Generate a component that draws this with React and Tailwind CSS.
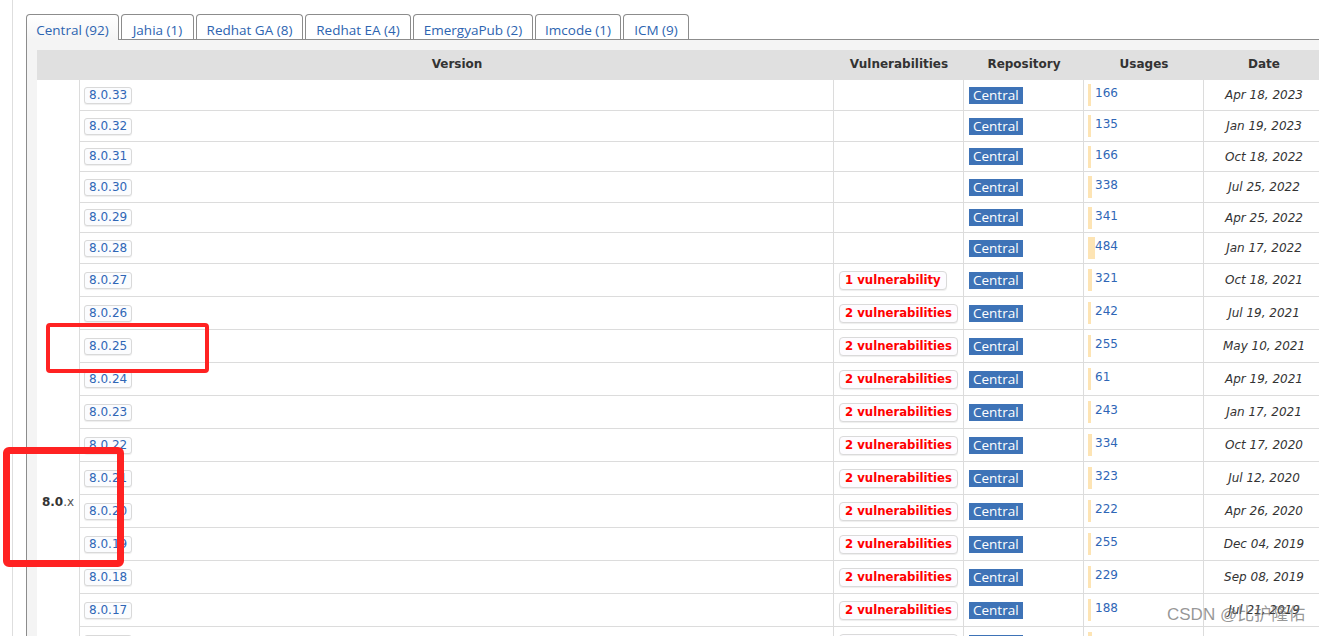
const tabs = [
  { label: "Central (92)", w: "w-[93px]", active: true },
  { label: "Jahia (1)", w: "w-[73px]" },
  { label: "Redhat GA (8)", w: "w-[107px]" },
  { label: "Redhat EA (4)", w: "w-[106px]" },
  { label: "EmergyaPub (2)", w: "w-[120px]" },
  { label: "Imcode (1)", w: "w-[86px]" },
  { label: "ICM (9)", w: "w-[66px]" },
];

const rows = [
  ["8.0.33", 0, 166, "Apr 18, 2023"],
  ["8.0.32", 0, 135, "Jan 19, 2023"],
  ["8.0.31", 0, 166, "Oct 18, 2022"],
  ["8.0.30", 0, 338, "Jul 25, 2022"],
  ["8.0.29", 0, 341, "Apr 25, 2022"],
  ["8.0.28", 0, 484, "Jan 17, 2022"],
  ["8.0.27", 1, 321, "Oct 18, 2021"],
  ["8.0.26", 2, 242, "Jul 19, 2021"],
  ["8.0.25", 2, 255, "May 10, 2021"],
  ["8.0.24", 2, 61, "Apr 19, 2021"],
  ["8.0.23", 2, 243, "Jan 17, 2021"],
  ["8.0.22", 2, 334, "Oct 17, 2020"],
  ["8.0.21", 2, 323, "Jul 12, 2020"],
  ["8.0.20", 2, 222, "Apr 26, 2020"],
  ["8.0.19", 2, 255, "Dec 04, 2019"],
  ["8.0.18", 2, 229, "Sep 08, 2019"],
  ["8.0.17", 2, 188, "Jul 21, 2019"],
  ["8.0.16", 2, 402, "Apr 25, 2019"],
  ["8.0.15", 2, 733, "Feb 02, 2019"],
  ["8.0.14", 2, 198, "Jan 02, 2019"],
  ["8.0.13", 2, 617, "Oct 22, 2018"],
  ["8.0.12", 2, 1240, "Jul 27, 2018"],
  ["8.0.11", 2, 1110, "Apr 19, 2018"],
  ["8.0.10", 2, 96, "Apr 18, 2018"],
  ["8.0.9", 2, 83, "Jan 18, 2018"],
  ["8.0.8", 2, 66, "Oct 18, 2017"],
];

const firstHeights = ["h-[31px]", "h-[31px]", "h-[30px]", "h-[31px]", "h-[30px]", "h-[31px]"];

function barWidth(n) {
  if (n >= 450) return 7;
  if (n >= 300) return 4;
  return 3;
}

function Row({ r, i }) {
  const [ver, vul, use, date] = r;
  const h = i < 6 ? firstHeights[i] : "h-[33px]";
  return (
    <div className={`flex ${h} border-b border-[#dcdcdc]`}>
      <div className="w-[754px] shrink-0 border-r border-[#dcdcdc] flex items-center pl-[4px]">
        <span className="inline-block px-[4px] leading-[15px] border border-[#d9d9d9] rounded-[3px] bg-[#fbfcfe] text-[#2f66b6] shadow-[0_1px_1px_rgba(0,0,0,0.07)]">
          {ver}
        </span>
      </div>
      <div className="w-[130px] shrink-0 border-r border-[#dcdcdc] flex items-center pl-[5px]">
        {vul > 0 && (
          <span className="inline-block px-[5px] leading-[17px] border border-[#dadada] rounded-[4px] bg-[#fdfcff] text-[#ff0000] text-[11.7px] font-bold shadow-[0_1px_1px_rgba(0,0,0,0.07)]">
            {vul === 1 ? "1 vulnerability" : `${vul} vulnerabilities`}
          </span>
        )}
      </div>
      <div className="w-[120px] shrink-0 border-r border-[#dcdcdc] flex items-center pl-[5px]">
        <span className="inline-block bg-[#3e73b7] text-white px-[4px] leading-[17px] text-[13.5px] font-['Open_Sans',sans-serif]">
          Central
        </span>
      </div>
      <div className="w-[120px] shrink-0 border-r border-[#dcdcdc] flex items-center pl-[4px]">
        <div className="w-[7px] shrink-0 flex">
          <div className="h-[22px] bg-[#fde4b4]" style={{ width: barWidth(use) }} />
        </div>
        <span className="text-[#2f66b6] mb-[4px]">{use}</span>
      </div>
      <div className="w-[120px] shrink-0 flex items-center justify-center italic text-[#333]">
        {date}
      </div>
    </div>
  );
}

export default function App() {
  return (
    <div className="relative h-[636px] w-full overflow-hidden bg-white font-['DejaVu_Sans',Verdana,sans-serif] text-[12px]">
      <div className="ml-[12px] h-full border-l border-[#dedede] pl-[13px] pt-[14px]">
        <div className="flex h-[25px] items-start gap-[2px]">
          {tabs.map((t) => (
            <div
              key={t.label}
              className={`${t.w} shrink-0 ${t.active ? "relative z-10 h-[26px] bg-linear-to-b from-white to-[#f4f4f4]" : "h-[25px] bg-white"} border-t border-x border-[#8c8c8c] rounded-t-[4px] pt-[6px] text-center leading-[18px] text-[13.5px] text-[#2d64b0] font-['Open_Sans',sans-serif]`}
            >
              {t.label}
            </div>
          ))}
        </div>
        <div className="w-[1400px] border-t border-l border-[#8c8c8c] bg-[#f4f4f4] pl-[10px] pt-[10px]">
          <div className="w-[1287px] bg-white">
            <div className="flex h-[30px] bg-[#e0e0e0] font-bold text-[#333] pb-[2px]">
              <div className="w-[43px] shrink-0" />
              <div className="w-[754px] shrink-0 flex items-center justify-center">Version</div>
              <div className="w-[130px] shrink-0 flex items-center justify-center">Vulnerabilities</div>
              <div className="w-[120px] shrink-0 flex items-center justify-center">Repository</div>
              <div className="w-[120px] shrink-0 flex items-center justify-center">Usages</div>
              <div className="w-[120px] shrink-0 flex items-center justify-center">Date</div>
            </div>
            <div className="flex">
              <div className="w-[43px] shrink-0 border-r border-[#dcdcdc] flex items-center justify-center text-[#333]">
                <span>
                  <b>8.0</b>
                  <span className="text-[#555]">.x</span>
                </span>
              </div>
              <div className="flex flex-col">
                {rows.map((r, i) => (
                  <Row key={r[0]} r={r} i={i} />
                ))}
              </div>
            </div>
          </div>
        </div>
      </div>

      <div className="absolute left-[46px] top-[323px] h-[50px] w-[163px] rounded-[4px] border-4 border-[#ff2222]" />
      <div className="absolute left-[3px] top-[447px] h-[120px] w-[121px] rounded-[6px] border-[7px] border-[#ff2222]" />

      <div className="absolute left-[1167px] top-[603px] text-[17px] leading-[24px] text-[rgba(105,105,105,0.7)] font-['Liberation_Sans','Noto_Sans_CJK_SC',sans-serif]">
        CSDN @比护隆佑
      </div>
    </div>
  );
}
